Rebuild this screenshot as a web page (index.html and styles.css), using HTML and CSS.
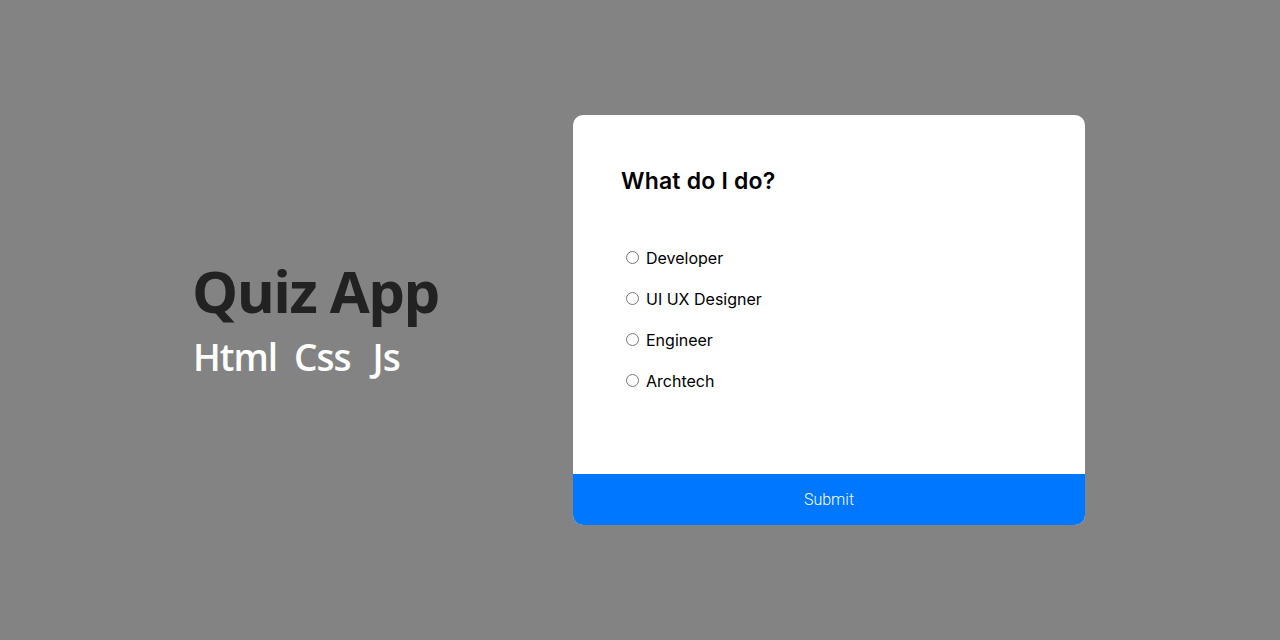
FILE: index.html
```html
<!DOCTYPE html>
<html lang="en">
<head>
<meta charset="utf-8">
<title>Quiz App</title>
<link rel="stylesheet" href="styles.css">
</head>
<body>
<main class="page">
  <section class="intro">
    <h1 class="intro-title">Quiz App</h1>
    <p class="intro-tags"><span>Html</span><span>Css</span><span>Js</span></p>
  </section>
  <section class="card">
    <div class="quiz-body">
      <h2 class="question">What do I do?</h2>
      <ul class="answers">
        <li class="answer"><input type="radio" name="answer" id="a"><label for="a">Developer</label></li>
        <li class="answer"><input type="radio" name="answer" id="b"><label for="b">UI UX Designer</label></li>
        <li class="answer"><input type="radio" name="answer" id="c"><label for="c">Engineer</label></li>
        <li class="answer"><input type="radio" name="answer" id="d"><label for="d">Archtech</label></li>
      </ul>
    </div>
    <button class="submit" type="button">Submit</button>
  </section>
</main>
</body>
</html>
```
FILE: styles.css
```css
* { box-sizing: border-box; }
html, body { margin: 0; padding: 0; }
body {
  background: #838383;
  height: 100vh;
  font-family: "Inter", "Liberation Sans", sans-serif;
}
.page {
  height: 100vh;
  padding-right: 1px;
  display: flex;
  align-items: center;
  justify-content: center;
}
.intro {
  width: 379px;
}
.intro-title {
  margin: 0 0 0 -2px;
  font-family: "Open Sans", sans-serif;
  font-weight: 700;
  font-size: 58px;
  line-height: 62px;
  letter-spacing: -1.5px;
  color: #222222;
}
.intro-tags {
  margin: 12px 0 0 -1px;
  display: flex;
  gap: 17px;
  font-family: "Open Sans", sans-serif;
  font-weight: 600;
  font-size: 37px;
  line-height: 46px;
  color: #ffffff;
  letter-spacing: -1px;
}
.intro-tags span:last-child { margin-left: 5px; }
.card {
  width: 512px;
  height: 410px;
  background: #ffffff;
  border-radius: 10px;
  overflow: hidden;
  display: flex;
  flex-direction: column;
}
.quiz-body {
  flex: 1;
  padding: 50px 48px 0;
}
.question {
  margin: 0 0 40px;
  font-size: 23px;
  font-weight: 600;
  line-height: 32px;
  color: #000;
  letter-spacing: 0.2px;
}
.answers {
  list-style: none;
  margin: 0;
  padding: 0;
}
.answer {
  display: flex;
  align-items: center;
  height: 41px;
  font-size: 16px;
  color: #000;
}
.answer input {
  margin: 0 7px 0 5px;
  width: 13px;
  height: 13px;
}
.submit {
  height: 51px;
  border: 0;
  background: #0077ff;
  color: #ffffff;
  font-family: "Roboto", sans-serif;
  font-weight: 300;
  font-size: 16px;
  cursor: pointer;
}
```
